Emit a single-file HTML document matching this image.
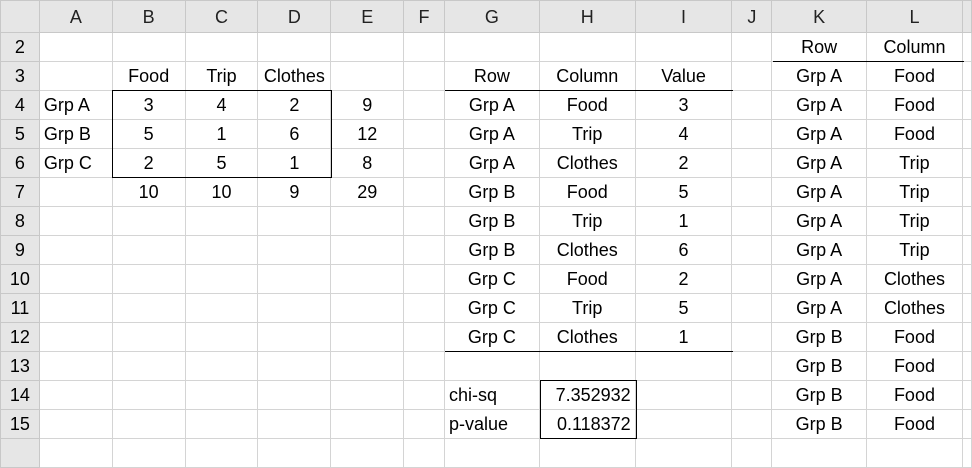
<!DOCTYPE html>
<html><head><meta charset="utf-8"><style>
body{margin:0;width:972px;height:444px;overflow:hidden;background:#fff;font-family:"Liberation Sans",Arial,sans-serif;font-size:18px;color:#000;position:relative}
table{border-collapse:collapse;table-layout:fixed;position:absolute;left:0;top:0}
td{border:1px solid #d4d4d4;height:28px;max-height:28px;padding:0 4px;white-space:nowrap;overflow:hidden;text-align:center;line-height:28px}
td span{position:relative;top:1px}
tr.h td{background:#e6e6e6;height:31px;border-color:#c8c8c8;color:#222}
td.rh{background:#e6e6e6;border-color:#c8c8c8;text-align:center;padding:0}
td.l{text-align:left}td.r{text-align:right}
.ln{position:absolute;background:#000}
</style></head><body>
<table>
<colgroup><col style="width:39px"><col style="width:73px"><col style="width:73px"><col style="width:73px"><col style="width:73px"><col style="width:73px"><col style="width:41px"><col style="width:95px"><col style="width:96px"><col style="width:97px"><col style="width:40px"><col style="width:95px"><col style="width:96px"><col style="width:8px"></colgroup>
<tr class="h"><td style="background:#e6e6e6"></td><td>A</td><td>B</td><td>C</td><td>D</td><td>E</td><td>F</td><td>G</td><td>H</td><td>I</td><td>J</td><td>K</td><td>L</td><td></td></tr>
<tr><td class="rh">2</td><td></td><td></td><td></td><td></td><td></td><td></td><td></td><td></td><td></td><td></td><td>Row</td><td>Column</td><td></td></tr>
<tr><td class="rh">3</td><td></td><td>Food</td><td>Trip</td><td>Clothes</td><td></td><td></td><td>Row</td><td>Column</td><td>Value</td><td></td><td>Grp A</td><td>Food</td><td></td></tr>
<tr><td class="rh">4</td><td class="l">Grp A</td><td>3</td><td>4</td><td>2</td><td>9</td><td></td><td>Grp A</td><td>Food</td><td>3</td><td></td><td>Grp A</td><td>Food</td><td></td></tr>
<tr><td class="rh">5</td><td class="l">Grp B</td><td>5</td><td>1</td><td>6</td><td>12</td><td></td><td>Grp A</td><td>Trip</td><td>4</td><td></td><td>Grp A</td><td>Food</td><td></td></tr>
<tr><td class="rh">6</td><td class="l">Grp C</td><td>2</td><td>5</td><td>1</td><td>8</td><td></td><td>Grp A</td><td>Clothes</td><td>2</td><td></td><td>Grp A</td><td>Trip</td><td></td></tr>
<tr><td class="rh">7</td><td></td><td>10</td><td>10</td><td>9</td><td>29</td><td></td><td>Grp B</td><td>Food</td><td>5</td><td></td><td>Grp A</td><td>Trip</td><td></td></tr>
<tr><td class="rh">8</td><td></td><td></td><td></td><td></td><td></td><td></td><td>Grp B</td><td>Trip</td><td>1</td><td></td><td>Grp A</td><td>Trip</td><td></td></tr>
<tr><td class="rh">9</td><td></td><td></td><td></td><td></td><td></td><td></td><td>Grp B</td><td>Clothes</td><td>6</td><td></td><td>Grp A</td><td>Trip</td><td></td></tr>
<tr><td class="rh">10</td><td></td><td></td><td></td><td></td><td></td><td></td><td>Grp C</td><td>Food</td><td>2</td><td></td><td>Grp A</td><td>Clothes</td><td></td></tr>
<tr><td class="rh">11</td><td></td><td></td><td></td><td></td><td></td><td></td><td>Grp C</td><td>Trip</td><td>5</td><td></td><td>Grp A</td><td>Clothes</td><td></td></tr>
<tr><td class="rh">12</td><td></td><td></td><td></td><td></td><td></td><td></td><td>Grp C</td><td>Clothes</td><td>1</td><td></td><td>Grp B</td><td>Food</td><td></td></tr>
<tr><td class="rh">13</td><td></td><td></td><td></td><td></td><td></td><td></td><td></td><td></td><td></td><td></td><td>Grp B</td><td>Food</td><td></td></tr>
<tr><td class="rh">14</td><td></td><td></td><td></td><td></td><td></td><td></td><td class="l">chi-sq</td><td class="r">7.352932</td><td></td><td></td><td>Grp B</td><td>Food</td><td></td></tr>
<tr><td class="rh">15</td><td></td><td></td><td></td><td></td><td></td><td></td><td class="l">p-value</td><td class="r">0.118372</td><td></td><td></td><td>Grp B</td><td>Food</td><td></td></tr>
<tr><td class="rh"></td><td></td><td></td><td></td><td></td><td></td><td></td><td></td><td></td><td></td><td></td><td></td><td></td><td></td></tr>
</table>
<div class="ln" style="left:445px;top:90px;width:288px;height:1px"></div>
<div class="ln" style="left:445px;top:351px;width:288px;height:1px"></div>
<div class="ln" style="left:773px;top:61px;width:191px;height:1px"></div>
<div style="position:absolute;left:112px;top:90px;width:218px;height:86px;border:1px solid #000"></div>
<div style="position:absolute;left:540px;top:380px;width:95px;height:57px;border:1px solid #000"></div>
</body></html>
